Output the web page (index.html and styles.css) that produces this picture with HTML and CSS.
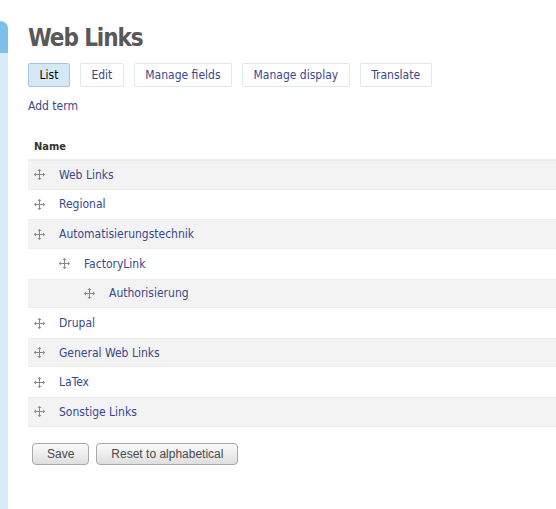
FILE: index.html
```html
<!DOCTYPE html>
<html>
<head>
<meta charset="utf-8">
<link rel="stylesheet" href="styles.css">
</head>
<body>
<div class="page">
  <div class="sidebar"><div class="sidebar-top"></div></div>
  <div class="content">
    <h1 class="title">Web Links</h1>
    <ul class="tabs">
      <li class="tab active">List</li>
      <li class="tab">Edit</li>
      <li class="tab">Manage fields</li>
      <li class="tab">Manage display</li>
      <li class="tab">Translate</li>
    </ul>
    <a class="action">Add term</a>
    <table class="terms">
      <thead><tr><th>Name</th></tr></thead>
      <tbody>
        <tr class="odd"><td><span class="cell lvl0"><svg class="drag" viewBox="0 0 11 11"><path d="M5.5 0.5v10M0.5 5.5h10" /><path class="head" d="M5.5 0l-2 2h4zM5.5 11l-2-2h4zM0 5.5l2-2v4zM11 5.5l-2-2v4z"/></svg><a>Web Links</a></span></td></tr>
        <tr class="even"><td><span class="cell lvl0"><svg class="drag" viewBox="0 0 11 11"><path d="M5.5 0.5v10M0.5 5.5h10" /><path class="head" d="M5.5 0l-2 2h4zM5.5 11l-2-2h4zM0 5.5l2-2v4zM11 5.5l-2-2v4z"/></svg><a>Regional</a></span></td></tr>
        <tr class="odd"><td><span class="cell lvl0"><svg class="drag" viewBox="0 0 11 11"><path d="M5.5 0.5v10M0.5 5.5h10" /><path class="head" d="M5.5 0l-2 2h4zM5.5 11l-2-2h4zM0 5.5l2-2v4zM11 5.5l-2-2v4z"/></svg><a>Automatisierungstechnik</a></span></td></tr>
        <tr class="even"><td><span class="cell lvl1"><svg class="drag" viewBox="0 0 11 11"><path d="M5.5 0.5v10M0.5 5.5h10" /><path class="head" d="M5.5 0l-2 2h4zM5.5 11l-2-2h4zM0 5.5l2-2v4zM11 5.5l-2-2v4z"/></svg><a>FactoryLink</a></span></td></tr>
        <tr class="odd"><td><span class="cell lvl2"><svg class="drag" viewBox="0 0 11 11"><path d="M5.5 0.5v10M0.5 5.5h10" /><path class="head" d="M5.5 0l-2 2h4zM5.5 11l-2-2h4zM0 5.5l2-2v4zM11 5.5l-2-2v4z"/></svg><a>Authorisierung</a></span></td></tr>
        <tr class="even"><td><span class="cell lvl0"><svg class="drag" viewBox="0 0 11 11"><path d="M5.5 0.5v10M0.5 5.5h10" /><path class="head" d="M5.5 0l-2 2h4zM5.5 11l-2-2h4zM0 5.5l2-2v4zM11 5.5l-2-2v4z"/></svg><a>Drupal</a></span></td></tr>
        <tr class="odd"><td><span class="cell lvl0"><svg class="drag" viewBox="0 0 11 11"><path d="M5.5 0.5v10M0.5 5.5h10" /><path class="head" d="M5.5 0l-2 2h4zM5.5 11l-2-2h4zM0 5.5l2-2v4zM11 5.5l-2-2v4z"/></svg><a>General Web Links</a></span></td></tr>
        <tr class="even"><td><span class="cell lvl0"><svg class="drag" viewBox="0 0 11 11"><path d="M5.5 0.5v10M0.5 5.5h10" /><path class="head" d="M5.5 0l-2 2h4zM5.5 11l-2-2h4zM0 5.5l2-2v4zM11 5.5l-2-2v4z"/></svg><a>LaTex</a></span></td></tr>
        <tr class="odd"><td><span class="cell lvl0"><svg class="drag" viewBox="0 0 11 11"><path d="M5.5 0.5v10M0.5 5.5h10" /><path class="head" d="M5.5 0l-2 2h4zM5.5 11l-2-2h4zM0 5.5l2-2v4zM11 5.5l-2-2v4z"/></svg><a>Sonstige Links</a></span></td></tr>
      </tbody>
    </table>
    <div class="actions">
      <button class="btn">Save</button>
      <button class="btn">Reset to alphabetical</button>
    </div>
  </div>
</div>
</body>
</html>
```

FILE: styles.css
```css
html, body {
  margin: 0;
  padding: 0;
  background: #fff;
  overflow: hidden;
}
.page {
  display: flex;
  width: 556px;
  height: 509px;
  overflow: hidden;
  font-family: "DejaVu Sans Condensed", "DejaVu Sans", sans-serif;
}
.sidebar {
  width: 8px;
  flex: none;
  margin-top: 21px;
  background: #d8ebf9;
  border-top-right-radius: 8px;
  overflow: hidden;
}
.sidebar-top {
  height: 32px;
  background: #7cbfea;
}
.content {
  flex: 1;
  padding-left: 20px;
  min-width: 0;
}
.title {
  margin: 24px 0 0 0;
  font-size: 24px;
  line-height: 28px;
  font-weight: bold;
  letter-spacing: -1.1px;
  color: #585858;
}
.tabs {
  display: flex;
  gap: 10px;
  list-style: none;
  margin: 11px 0 0 0;
  padding: 0;
}
.tab {
  height: 22px;
  line-height: 22px;
  padding: 0 10.5px;
  border: 1px solid #dfe9f2;
  border-radius: 2px;
  color: #36488e;
  font-size: 12px;
  background: #fff;
}
.tab.active {
  background: #d5e8f7;
  border-color: #a8c8e2;
  color: #000;
}
.action {
  display: block;
  margin-top: 12px;
  font-size: 12px;
  line-height: 14px;
  color: #36488e;
}
.terms {
  margin-top: 20px;
  border-collapse: collapse;
  width: 540px;
}
.terms th {
  text-align: left;
  font-size: 11px;
  font-weight: bold;
  color: #333;
  padding: 0 6px;
  height: 27px;
  box-shadow: inset 0 -1px #ececec;
}
.terms td {
  height: 29.65px;
  padding: 0;
  font-size: 12px;
  border: none;
}
.terms tr.odd td {
  background: #f3f3f3;
  box-shadow: inset 0 1px #ececec, inset 0 -1px #ececec;
}
.terms tr.even td {
  background: #fff;
}
.cell {
  display: flex;
  align-items: center;
  gap: 14px;
}
.cell.lvl0 { padding-left: 6px; }
.cell.lvl1 { padding-left: 31px; }
.cell.lvl2 { padding-left: 56px; }
.drag {
  width: 11px;
  height: 11px;
  flex: none;
}
.drag path {
  stroke: #888;
  stroke-width: 1;
  fill: none;
}
.drag path.head {
  stroke: none;
  fill: #888;
}
.cell a {
  color: #36488e;
}
.actions {
  display: flex;
  gap: 7px;
  margin-top: 16px;
  padding-left: 4px;
}
.btn {
  font-family: "Liberation Sans", Arial, sans-serif;
  font-size: 12px;
  color: #4a4a4a;
  height: 22px;
  padding: 0 14px;
  border: 1px solid #a9a9a9;
  border-radius: 4px;
  background: linear-gradient(#fafafa, #ececec 55%, #dedede);
}
```
